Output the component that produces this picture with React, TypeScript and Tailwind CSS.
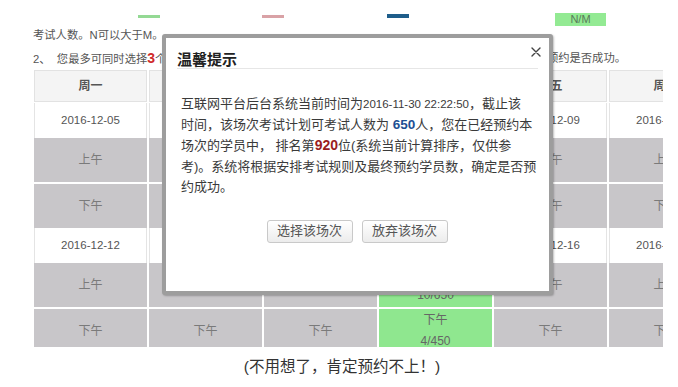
const FONT = "font-['Liberation_Sans','Noto_Sans_CJK_SC',sans-serif]";

type Cell = { text: string; sub?: string; green?: boolean };

const WEEK = ["周一", "周二", "周三", "周四", "周五", "周六"];

// 两周的排班数据
const WEEKS: { dates: string[]; am: Cell[]; pm: Cell[] }[] = [
  {
    dates: ["2016-12-05", "2016-12-06", "2016-12-07", "2016-12-08", "2016-12-09", "2016-12-10"],
    am: WEEK.map(() => ({ text: "上午" })),
    pm: WEEK.map(() => ({ text: "下午" })),
  },
  {
    dates: ["2016-12-12", "2016-12-13", "2016-12-14", "2016-12-15", "2016-12-16", "2016-12-17"],
    am: WEEK.map((_, i) => (i === 3 ? { text: "上午", sub: "10/650", green: true } : { text: "上午" })),
    pm: WEEK.map((_, i) => (i === 3 ? { text: "下午", sub: "4/450", green: true } : { text: "下午" })),
  },
];

function SlotRow({ cells, className }: { cells: Cell[]; className?: string }) {
  return (
    <div className={`grid grid-cols-[repeat(6,113px)] gap-x-[2px] h-[44px] ${className ?? ""}`}>
      {cells.map((c, i) => (
        <div
          key={i}
          className={`flex flex-col items-center justify-center text-[12px] leading-[21px] ${
            c.green ? "bg-[#8fe78f] text-[#666]" : "bg-[#c8c6c9] text-[#7a7a7a]"
          }`}
        >
          <span>{c.text}</span>
          {c.sub && <span>{c.sub}</span>}
        </div>
      ))}
    </div>
  );
}

function CloseIcon() {
  return (
    <svg width="10" height="10" viewBox="0 0 10 10" className="block">
      <path d="M1 1 L9 9 M9 1 L1 9" stroke="#444" strokeWidth="1.4" strokeLinecap="round" />
    </svg>
  );
}

function Dialog() {
  return (
    <div className="absolute left-[162px] top-[34px] w-[391px] h-[261px] z-10 bg-white border-4 border-[#9d9d9d] rounded-[3px] shadow-[1px_1px_2px_rgba(0,0,0,0.25)]">
      <div className="mx-[11px] pt-[14px] border-b border-[#e6e6e6]">
        <h3 className="text-[15px] leading-[16px] font-bold text-[#222]">温馨提示</h3>
      </div>
      <button className="absolute right-[8px] top-[9px]">
        <CloseIcon />
      </button>

      <div className="pl-[15px] pt-[25px] text-[13px] leading-[20.5px] text-[#3a3a3a] whitespace-nowrap">
        <p>
          互联网平台后台系统当前时间为<span className="text-[11.5px]">2016-11-30 22:22:50</span>，截止该
        </p>
        <p>
          时间，该场次考试计划可考试人数为{" "}
          <span className="font-bold text-[13.5px] text-[#1d4f93]">650</span>人，您在已经预约本
        </p>
        <p>
          场次的学员中， 排名第<span className="font-bold text-[14px] text-[#9a1d1d]">920</span>位(系统当前计算排序，仅供参
        </p>
        <p>考)。系统将根据安排考试规则及最终预约学员数，确定是否预</p>
        <p>约成功。</p>
      </div>

      <div className="flex justify-center gap-[9px] mt-[22px] -ml-[1px]">
        <button className="w-[86px] h-[23px] border border-[#c9c9c9] rounded-[3px] bg-gradient-to-b from-white to-[#ececec] text-[13px] text-[#555]">
          选择该场次
        </button>
        <button className="w-[86px] h-[23px] border border-[#c9c9c9] rounded-[3px] bg-gradient-to-b from-white to-[#ececec] text-[13px] text-[#555]">
          放弃该场次
        </button>
      </div>
    </div>
  );
}

export default function App() {
  return (
    <div className={`w-[678px] h-[387px] bg-white overflow-hidden ${FONT}`}>
      <div className="relative h-[347px] overflow-hidden">
        {/* 图例 */}
        <div className="flex items-start h-[27px]">
          <div className="ml-[138px] mt-[15px] w-[22px] h-[3px] bg-[#94d994]" />
          <div className="ml-[102px] mt-[15px] w-[22px] h-[3px] bg-[#d9a2a6]" />
          <div className="ml-[103px] mt-[14px] w-[22px] h-[4px] bg-[#1e5d8a]" />
          <div className="ml-[146px] mt-[13px] w-[51px] h-[13px] bg-[#93ea93] text-[11px] leading-[13px] text-[#5a7a5a] text-center">
            N/M
          </div>
        </div>

        <p className="pl-[33px] h-[23px] text-[11.3px] leading-[17px] text-[#555]">考试人数。N可以大于M。</p>
        <div className="flex pl-[33px] w-[626px] h-[20px] text-[11.3px] leading-[17px] text-[#555] whitespace-nowrap">
          <p className="flex-1 overflow-hidden">
            2、&nbsp;&nbsp;您最多可同时选择<span className="font-bold text-[14px] text-[#d02a2a]">3</span>
            个场次进行预约，系统将根据安排考试规则及最终预约学员数，确定您的
          </p>
          <p className="shrink-0">预约是否成功。</p>
        </div>

        {/* 排班表 */}
        <div className="ml-[34px] w-[629px] overflow-hidden">
          <div className="grid grid-cols-[repeat(6,113px)] gap-x-[2px] h-[32px]">
            {WEEK.map((w) => (
              <div
                key={w}
                className="flex items-center justify-center bg-[#f4f4f4] border border-[#e2e2e2] text-[12px] font-bold text-[#555]"
              >
                {w}
              </div>
            ))}
          </div>
          {WEEKS.map((wk, i) => (
            <div key={i}>
              <div className={`grid grid-cols-[repeat(6,113px)] gap-x-[2px] h-[35px] ${i === 0 ? "mt-[1px]" : ""}`}>
                {wk.dates.map((d) => (
                  <div
                    key={d}
                    className="flex items-center justify-center bg-white border-x border-[#e4e4e4] text-[11.5px] text-[#555]"
                  >
                    {d}
                  </div>
                ))}
              </div>
              <SlotRow cells={wk.am} />
              <SlotRow cells={wk.pm} className="mt-[2px]" />
            </div>
          ))}
        </div>

        <Dialog />
      </div>

      <p className="h-[40px] flex items-center justify-center pl-[6px] text-[15.5px] text-[#333]">
        (不用想了，肯定预约不上！)
      </p>
    </div>
  );
}
